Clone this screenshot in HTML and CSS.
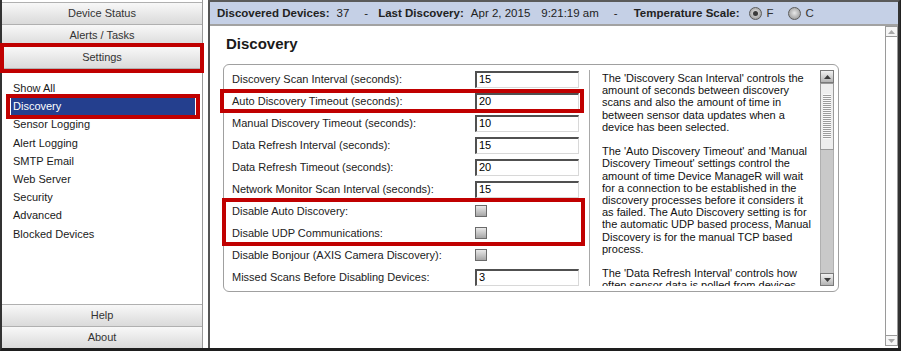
FILE: index.html
```html
<!DOCTYPE html>
<html lang="en">
<head>
<meta charset="utf-8">
<title>Device ManageR - Settings - Discovery</title>
<link rel="stylesheet" href="styles.css">
</head>
<body>
<div class="app">
  <aside class="left">
    <div class="tab">Device Status</div>
    <div class="tab">Alerts / Tasks</div>
    <div class="tab tab-open">Settings</div>
    <ul class="menu">
      <li>Show All</li>
      <li class="active">Discovery</li>
      <li>Sensor Logging</li>
      <li>Alert Logging</li>
      <li>SMTP Email</li>
      <li>Web Server</li>
      <li>Security</li>
      <li>Advanced</li>
      <li>Blocked Devices</li>
    </ul>
    <div class="tab">Help</div>
    <div class="tab">About</div>
  </aside>
  <div class="splitter"></div>
  <main class="right">
    <header class="status">
      <b>Discovered Devices:</b>
      <span class="val">37</span>
      <span class="dash">-</span>
      <b>Last Discovery:</b>
      <span class="val">Apr 2, 2015</span>
      <span class="time">9:21:19 am</span>
      <span class="dash dash-wide">-</span>
      <b>Temperature Scale:</b>
      <span class="radio on"></span><span class="opt">F</span>
      <span class="radio radio-c"></span><span class="opt">C</span>
    </header>
    <div class="body">
      <div class="content">
        <h1>Discovery</h1>
        <div class="panel">
          <div class="form">
            <div class="row"><label>Discovery Scan Interval (seconds):</label><span class="field">15</span></div>
            <div class="row"><label>Auto Discovery Timeout (seconds):</label><span class="field">20</span></div>
            <div class="row"><label>Manual Discovery Timeout (seconds):</label><span class="field">10</span></div>
            <div class="row"><label>Data Refresh Interval (seconds):</label><span class="field">15</span></div>
            <div class="row"><label>Data Refresh Timeout (seconds):</label><span class="field">20</span></div>
            <div class="row"><label>Network Monitor Scan Interval (seconds):</label><span class="field">15</span></div>
            <div class="row"><label>Disable Auto Discovery:</label><span class="check"></span></div>
            <div class="row"><label>Disable UDP Communications:</label><span class="check"></span></div>
            <div class="row"><label>Disable Bonjour (AXIS Camera Discovery):</label><span class="check"></span></div>
            <div class="row"><label>Missed Scans Before Disabling Devices:</label><span class="field">3</span></div>
          </div>
          <div class="help">
            <div class="help-text">
              <p>The 'Discovery Scan Interval' controls the amount of seconds between discovery scans and also the amount of time in between sensor data updates when a device has been selected.</p>
              <p>The 'Auto Discovery Timeout' and 'Manual Discovery Timeout' settings control the amount of time Device ManageR will wait for a connection to be established in the discovery processes before it considers it as failed. The Auto Discovery setting is for the automatic UDP based process, Manual Discovery is for the manual TCP based process.</p>
              <p>The 'Data Refresh Interval' controls how often sensor data is polled from devices when a device has been selected.</p>
            </div>
            <div class="iscroll">
              <div class="ibtn"><svg width="7" height="4" viewBox="0 0 7 4"><path d="M0 4 L3.5 0 L7 4 Z" fill="#3c3c3c"/></svg></div>
              <div class="ithumb"><div class="grip"></div></div>
              <div class="itrack"></div>
              <div class="ibtn"><svg width="7" height="4" viewBox="0 0 7 4"><path d="M0 0 L3.5 4 L7 0 Z" fill="#3c3c3c"/></svg></div>
            </div>
          </div>
        </div>
      </div>
      <div class="oscroll">
        <div class="obtn"><svg width="7" height="4" viewBox="0 0 7 4"><path d="M0 4 L3.5 0 L7 4 Z" fill="#a8a8a8"/></svg></div>
        <div class="othumb"></div>
        <div class="obtn"><svg width="7" height="4" viewBox="0 0 7 4"><path d="M0 0 L3.5 4 L7 0 Z" fill="#a8a8a8"/></svg></div>
      </div>
    </div>
  </main>
</div>
<div class="mark mark-settings"></div>
<div class="mark mark-nav"></div>
<div class="mark mark-row"></div>
<div class="mark mark-rows"></div>
</body>
</html>
```
FILE: styles.css
```css
* { box-sizing: border-box; }
html, body { margin: 0; padding: 0; }
body {
  position: relative;
  width: 901px;
  height: 351px;
  overflow: hidden;
  background: #fff;
  font-family: "Liberation Sans", Arial, sans-serif;
  font-size: 11px;
  color: #222;
}
.app {
  display: flex;
  width: 901px;
  height: 351px;
  border-left: 2px solid #333;
  border-right: 1px solid #222;
  border-bottom: 3px solid #1e1e1e;
}

/* left navigation */
.left {
  width: 201px;
  display: flex;
  flex-direction: column;
  padding-top: 2px;
  border-right: 1px solid #9a9a9a;
  background: #fff;
}
.tab {
  height: 22px;
  border-top: 1px solid #b0b0b0;
  background: linear-gradient(#f8f8f8, #dadada);
  text-align: center;
  line-height: 20px;
  color: #333;
}
.tab-open {
  height: 23px;
  border-bottom: 1px solid #b0b0b0;
}
.menu {
  flex: 1;
  list-style: none;
  margin: 0;
  padding: 10px 0 0;
}
.menu li {
  height: 18.2px;
  line-height: 18.2px;
  margin: 0 7px 0 9px;
  padding-left: 2px;
  color: #1a1a1a;
}
.menu li.active {
  background: #243f8e;
  color: #fff;
}
.splitter { width: 5px; background: #fff; }

/* right side */
.right {
  flex: 1;
  display: flex;
  flex-direction: column;
  border-top: 2px solid #5a5a5a;
  border-left: 2px solid #555;
  border-right: 2px solid #333;
}
.status {
  height: 24px;
  flex: none;
  display: flex;
  align-items: center;
  padding-left: 7px;
  background: #c5d0e6;
  border-bottom: 2px solid #a2a2a2;
  font-size: 11.5px;
  color: #222;
  white-space: nowrap;
}
.status b { font-weight: bold; }
.val { margin-left: 7px; }
.time { margin-left: 11px; }
.dash { margin: 0 10px 0 15px; }
.dash-wide { margin-right: 16px; }
.radio {
  position: relative;
  width: 13px;
  height: 13px;
  margin-left: 9px;
  border-radius: 50%;
  border: 1px solid #5c5c5c;
  background: radial-gradient(circle at 50% 45%, #e8e8e8 0, #bdbdbd 45%, #8a8a8a 100%);
}
.radio.on::after {
  content: "";
  position: absolute;
  left: 3px;
  top: 3px;
  width: 5px;
  height: 5px;
  border-radius: 50%;
  background: #3a3a3a;
}
.radio-c { margin-left: 14px; }
.opt { margin-left: 5px; color: #333; }

.body {
  flex: 1;
  display: flex;
  min-height: 0;
}
.content {
  flex: 1;
  padding: 9px 0 0 13px;
  overflow: hidden;
}
h1 {
  margin: 0 0 11px 3px;
  font-size: 15px;
  line-height: 18px;
  font-weight: bold;
  color: #1a1a1a;
}
.panel {
  width: 616px;
  height: 228px;
  display: flex;
  border: 1px solid #a0a0a0;
  border-radius: 6px;
}
.form {
  width: 365px;
  flex: none;
  padding: 3px 0 0 8px;
}
.row {
  display: flex;
  align-items: center;
  height: 22px;
}
.row label { width: 243px; color: #222; }
.field {
  width: 104px;
  height: 17px;
  padding-left: 2px;
  border-style: solid;
  border-width: 2px 1px 1px 2px;
  border-color: #505050 #d8d8d8 #d8d8d8 #505050;
  font-size: 11px;
  line-height: 13px;
  color: #000;
  background: #fff;
}
.check {
  width: 12px;
  height: 12px;
  border: 1px solid #6a6a6a;
  background: linear-gradient(#e8e8e8, #a6a6a6);
}

.help {
  flex: 1;
  display: flex;
  margin: 5px 0;
  padding-left: 12px;
  border-left: 1px solid #a8a8a8;
}
.help-text {
  width: 211px;
  flex: none;
  overflow: hidden;
  padding-top: 2px;
  line-height: 12.2px;
  color: #111;
}
.help-text p { margin: 0 0 12.2px; }

.iscroll {
  width: 14px;
  margin-left: 7px;
  display: flex;
  flex-direction: column;
}
.ibtn {
  height: 13px;
  flex: none;
  display: flex;
  align-items: center;
  justify-content: center;
  border: 1px solid #7a7a7a;
  background: linear-gradient(#f2f2f2, #b4b4b4);
}
.ithumb {
  height: 67px;
  flex: none;
  padding: 10px 2px;
  border: 1px solid #9a9a9a;
  background: #eeeeee;
}
.grip {
  height: 100%;
  background: repeating-linear-gradient(#fafafa 0 1px, #9c9c9c 1px 2px);
}
.itrack {
  flex: 1;
  background: #c9c9c9;
  border-left: 1px solid #b0b0b0;
  border-right: 1px solid #b0b0b0;
}

.oscroll {
  width: 13px;
  flex: none;
  display: flex;
  flex-direction: column;
  padding-bottom: 2px;
}
.obtn {
  height: 11px;
  flex: none;
  display: flex;
  align-items: center;
  justify-content: center;
  border: 1px solid #9a9a9a;
  background: #f6f6f6;
}
.othumb {
  flex: 1;
  background: #fff;
  border-left: 1px solid #9a9a9a;
  border-right: 1px solid #9a9a9a;
}

/* annotation highlights drawn over the screenshot */
.mark {
  position: absolute;
  border: 4px solid #c00000;
  pointer-events: none;
}
.mark-settings { left: 0; top: 43px; width: 204px; height: 30px; }
.mark-nav { left: 6px; top: 94px; width: 194px; height: 25px; }
.mark-row { left: 220px; top: 89px; width: 364px; height: 24px; }
.mark-rows { left: 222px; top: 198px; width: 363px; height: 48px; }
```
